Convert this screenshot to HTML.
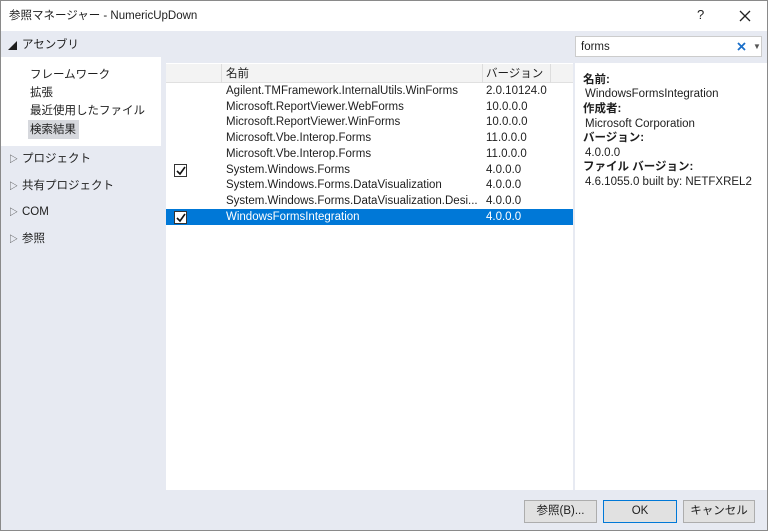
<!DOCTYPE html>
<html><head><meta charset="utf-8"><style>
*{margin:0;padding:0;box-sizing:border-box}
body{width:768px;height:531px;overflow:hidden;background:#e7eaf2;font-family:"Liberation Sans","Noto Sans CJK JP",sans-serif;font-size:11.5px;color:#1e1e1e;position:relative}
.a{position:absolute;white-space:nowrap;line-height:14px}
.frame{position:absolute;left:0;top:0;width:768px;height:531px;border:1px solid #8a8a8a;pointer-events:none}
.title{position:absolute;left:0;top:0;width:768px;height:31px;background:#fff}
.row{position:absolute;left:166px;width:407px;height:16px;line-height:16px}
.row .n{position:absolute;left:60px}
.row .v{position:absolute;left:320px}
.cb{position:absolute;left:8px;top:2px;width:13px;height:13px;border:1px solid #333;background:#fff}
.cb svg{position:absolute;left:1px;top:1px}
.btn{position:absolute;top:500px;height:23px;border:1px solid #adadad;background:#e1e1e1;text-align:center;line-height:21px}
</style></head><body>
<div class="title"></div>
<div class="a" style="left:9px;top:9px">参照マネージャー - NumericUpDown</div>
<div class="a" style="left:697px;top:8px;font-size:13px">?</div>
<svg class="a" style="left:739px;top:10px" width="12" height="12"><path d="M1 1L11 11M11 1L1 11" stroke="#222" stroke-width="1.3"/></svg>

<div class="a" style="left:8px;top:39px;font-size:9px">◢</div>
<div class="a" style="left:22px;top:38px">アセンブリ</div>
<div class="a" style="left:0;top:57px;width:161px;height:89px;background:#fff"></div>
<div class="a" style="left:30px;top:68px">フレームワーク</div>
<div class="a" style="left:30px;top:86px">拡張</div>
<div class="a" style="left:30px;top:104px">最近使用したファイル</div>
<div class="a" style="left:28px;top:120px;width:51px;height:19px;background:#d6d8dd"></div>
<div class="a" style="left:30px;top:123px">検索結果</div>
<div class="a" style="left:9px;top:152px;font-size:9px;color:#444">▷</div><div class="a" style="left:22px;top:152px">プロジェクト</div>
<div class="a" style="left:9px;top:179px;font-size:9px;color:#444">▷</div><div class="a" style="left:22px;top:179px">共有プロジェクト</div>
<div class="a" style="left:9px;top:205px;font-size:9px;color:#444">▷</div><div class="a" style="left:22px;top:205px">COM</div>
<div class="a" style="left:9px;top:232px;font-size:9px;color:#444">▷</div><div class="a" style="left:22px;top:232px">参照</div>

<div class="a" style="left:166px;top:63px;width:407px;height:427px;background:#fff"></div>
<div class="a" style="left:166px;top:64px;width:407px;height:19px;background:#f3f3f3;border-bottom:1px solid #e0e0e0"></div>
<div class="a" style="left:221px;top:64px;width:1px;height:19px;background:#ddd"></div>
<div class="a" style="left:482px;top:64px;width:1px;height:19px;background:#ddd"></div>
<div class="a" style="left:550px;top:64px;width:1px;height:19px;background:#ddd"></div>
<div class="a" style="left:226px;top:67px">名前</div>
<div class="a" style="left:486px;top:67px">バージョン</div>

<div class="row" style="top:83px"><span class="n">Agilent.TMFramework.InternalUtils.WinForms</span><span class="v">2.0.10124.0</span></div>
<div class="row" style="top:99px"><span class="n">Microsoft.ReportViewer.WebForms</span><span class="v">10.0.0.0</span></div>
<div class="row" style="top:114px"><span class="n">Microsoft.ReportViewer.WinForms</span><span class="v">10.0.0.0</span></div>
<div class="row" style="top:130px"><span class="n">Microsoft.Vbe.Interop.Forms</span><span class="v">11.0.0.0</span></div>
<div class="row" style="top:146px"><span class="n">Microsoft.Vbe.Interop.Forms</span><span class="v">11.0.0.0</span></div>
<div class="row" style="top:162px"><span class="cb"><svg width="10" height="10"><path d="M1 5L4 8L9 1" stroke="#111" stroke-width="1.6" fill="none"/></svg></span><span class="n">System.Windows.Forms</span><span class="v">4.0.0.0</span></div>
<div class="row" style="top:177px"><span class="n">System.Windows.Forms.DataVisualization</span><span class="v">4.0.0.0</span></div>
<div class="row" style="top:193px"><span class="n">System.Windows.Forms.DataVisualization.Desi...</span><span class="v">4.0.0.0</span></div>
<div class="row" style="top:209px;background:#0078d7;color:#fff"><span class="cb"><svg width="10" height="10"><path d="M1 5L4 8L9 1" stroke="#111" stroke-width="1.6" fill="none"/></svg></span><span class="n">WindowsFormsIntegration</span><span class="v">4.0.0.0</span></div>

<div class="a" style="left:575px;top:36px;width:187px;height:21px;background:#fff;border:1px solid #ccc"></div>
<div class="a" style="left:581px;top:40px">forms</div>
<svg class="a" style="left:737px;top:42px" width="9" height="9"><path d="M1 1L8 8M8 1L1 8" stroke="#1a6fc9" stroke-width="1.8"/></svg>
<div class="a" style="left:753px;top:40px;font-size:8px;color:#555">▼</div>

<div class="a" style="left:575px;top:63px;width:193px;height:427px;background:#fff"></div>
<div class="a" style="left:583px;top:73px;font-weight:bold">名前:</div>
<div class="a" style="left:585px;top:87px">WindowsFormsIntegration</div>
<div class="a" style="left:583px;top:102px;font-weight:bold">作成者:</div>
<div class="a" style="left:585px;top:117px">Microsoft Corporation</div>
<div class="a" style="left:583px;top:131px;font-weight:bold">バージョン:</div>
<div class="a" style="left:585px;top:146px">4.0.0.0</div>
<div class="a" style="left:583px;top:160px;font-weight:bold">ファイル バージョン:</div>
<div class="a" style="left:585px;top:175px">4.6.1055.0 built by: NETFXREL2</div>

<div class="btn" style="left:524px;width:73px">参照(B)...</div>
<div class="btn" style="left:603px;width:74px;border-color:#0078d7">OK</div>
<div class="btn" style="left:683px;width:72px">キャンセル</div>
<div class="frame"></div>
</body></html>
